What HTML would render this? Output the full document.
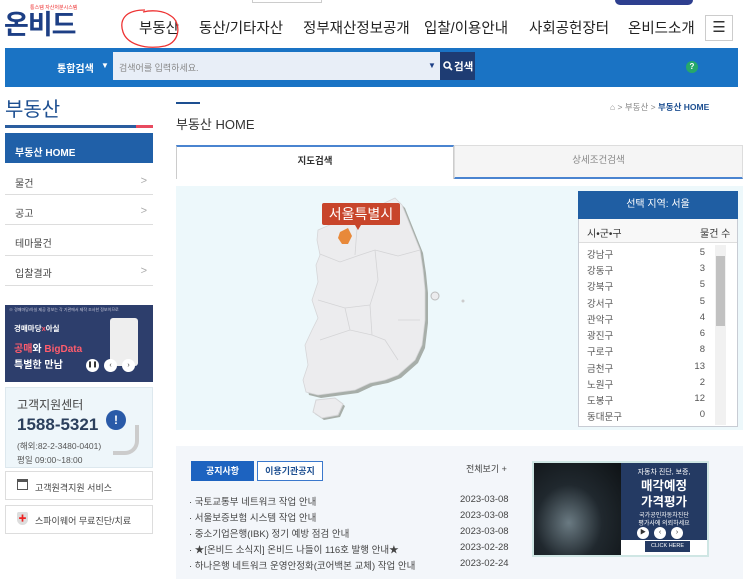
<!DOCTYPE html>
<html><head><meta charset="utf-8">
<style>
*{margin:0;padding:0;box-sizing:border-box}
body{width:743px;height:579px;overflow:hidden;background:#fff;font-family:"Liberation Sans","Noto Sans CJK KR",sans-serif;color:#333;position:relative}
.a{position:absolute}
.nav{font-size:14.5px;color:#222;top:17px}
.mi{position:absolute;left:5px;width:148px;font-size:10px;color:#444;padding-left:10px;border-bottom:1px solid #ddd}
.mi span{position:absolute;right:6px;color:#aaa;font-size:11px}
.row{position:absolute;left:587px;width:118px;font-size:9.5px;color:#555}
.row b{position:absolute;right:0;font-weight:normal}
.nt{position:absolute;left:189px;font-size:9.5px;color:#444}
.nd{position:absolute;left:460px;font-size:9.5px;color:#444}
</style></head><body>
<div class="a" style="left:4px;top:3px;font-size:27px;font-weight:bold;color:#1d3f85;letter-spacing:-1px">온비드</div>
<div class="a" style="left:30px;top:4px;font-size:5px;color:#e33">통스템 자산처분시스템</div>
<div class="nav a" style="left:139px">부동산</div>
<div class="nav a" style="left:199px">동산/기타자산</div>
<div class="nav a" style="left:303px">정부재산정보공개</div>
<div class="nav a" style="left:424px">입찰/이용안내</div>
<div class="nav a" style="left:529px">사회공헌장터</div>
<div class="nav a" style="left:628px">온비드소개</div>
<div class="a" style="left:705px;top:15px;width:28px;height:26px;border:1px solid #ccc;text-align:center;font-size:15px;line-height:24px">☰</div>
<svg class="a" style="left:115px;top:6px" width="72" height="46"><path d="M30 4 C10 4 4 14 8 26 C12 38 30 44 50 40 C66 36 66 16 56 10 C48 4 36 4 28 6" fill="none" stroke="#e33" stroke-width="1.3"/></svg>
<div class="a" style="left:252px;top:0;width:70px;height:3px;border:1px solid #ccc;border-top:none"></div>
<div class="a" style="left:615px;top:0;width:78px;height:5px;background:#2e3f8f;border-radius:0 0 6px 6px"></div>
<div class="a" style="left:5px;top:48px;width:733px;height:39px;background:#1a73c4"></div>
<div class="a" style="left:57px;top:60px;font-size:10px;color:#fff;font-weight:bold">통합검색</div>
<div class="a" style="left:101px;top:61px;font-size:8px;color:#fff">▼</div>
<div class="a" style="left:113px;top:52px;width:327px;height:28px;background:#e8eef7"></div>
<div class="a" style="left:119px;top:61px;font-size:9px;color:#888">검색어를 입력하세요.</div>
<div class="a" style="left:428px;top:61px;font-size:8px;color:#1d3f85">▼</div>
<div class="a" style="left:440px;top:52px;width:35px;height:28px;background:#1e3c73"></div>
<svg class="a" style="left:443px;top:61px" width="10" height="10"><circle cx="4" cy="4" r="3" fill="none" stroke="#fff" stroke-width="1.6"/><path d="M6 6 L9 9" stroke="#fff" stroke-width="1.8"/></svg>
<div class="a" style="left:454px;top:59px;font-size:10.5px;color:#fff;font-weight:bold">검색</div>
<div class="a" style="left:686px;top:61px;width:12px;height:12px;border-radius:50%;background:#26a86a;color:#fff;font-size:8px;text-align:center;line-height:12px;font-weight:bold">?</div>
<div class="a" style="left:5px;top:93px;font-size:20px;color:#1d4f91">부동산</div>
<div class="a" style="left:5px;top:125px;width:131px;height:3px;background:#2a5d9f"></div>
<div class="a" style="left:136px;top:125px;width:17px;height:3px;background:#e84a5f"></div>
<div class="a" style="left:5px;top:133px;width:148px;height:30px;background:#2060a8;color:#fff;font-size:10px;font-weight:bold;padding:11px 0 0 10px">부동산 HOME</div>
<div class="mi" style="top:165px;height:30px;padding-top:10px">물건<span>&gt;</span></div>
<div class="mi" style="top:195px;height:30px;padding-top:10px">공고<span>&gt;</span></div>
<div class="mi" style="top:225px;height:31px;padding-top:10px">테마물건</div>
<div class="mi" style="top:256px;height:30px;padding-top:9px">입찰결과<span>&gt;</span></div>
<div class="a" style="left:5px;top:305px;width:148px;height:77px;background:#2d3e6c"></div>
<div class="a" style="left:9px;top:307px;font-size:4px;color:#ccd">※ 경매마당/아실 제공 정보는 각 기관에서 제작 조사한 정보이므로</div>
<div class="a" style="left:14px;top:323px;font-size:7.5px;color:#fff;font-weight:bold">경매마당<span style="color:#f56">x</span>아실</div>
<div class="a" style="left:14px;top:340px;font-size:10px;color:#ff5c6c;font-weight:bold">공매<span style="color:#fff">와</span> BigData</div>
<div class="a" style="left:14px;top:356px;font-size:10px;color:#fff;font-weight:bold">특별한 만남</div>
<div class="a" style="left:110px;top:318px;width:28px;height:48px;background:#eee;border-radius:3px"></div>
<div class="a" style="left:86px;top:359px;width:13px;height:13px;border-radius:50%;background:#fff;font-size:6px;text-align:center;line-height:13px">❚❚</div>
<div class="a" style="left:104px;top:359px;width:13px;height:13px;border-radius:50%;background:#fff;font-size:7px;text-align:center;line-height:13px">‹</div>
<div class="a" style="left:122px;top:359px;width:13px;height:13px;border-radius:50%;background:#fff;font-size:7px;text-align:center;line-height:13px">›</div>
<div class="a" style="left:5px;top:387px;width:148px;height:81px;background:#eef6fa;border:1px solid #dde8ee"></div>
<div class="a" style="left:17px;top:396px;font-size:12px;color:#444">고객지원센터</div>
<div class="a" style="left:17px;top:415px;font-size:17px;color:#2b3f5c;font-weight:bold">1588-5321</div>
<div class="a" style="left:17px;top:440px;font-size:8.5px;color:#555">(해외:82-2-3480-0401)</div>
<div class="a" style="left:17px;top:454px;font-size:8.5px;color:#555">평일 09:00~18:00</div>
<div class="a" style="left:106px;top:410px;width:20px;height:20px;border-radius:50%;background:#2a5aa8;color:#fff;font-weight:bold;text-align:center;line-height:20px;font-size:12px">!</div>
<div class="a" style="left:113px;top:425px;width:26px;height:30px;border:4px solid #ccc;border-radius:0 0 14px 0;border-left:none;border-top:none"></div>
<div class="a" style="left:5px;top:471px;width:148px;height:29px;border:1px solid #ddd;font-size:9px;color:#444;padding:9px 0 0 29px">고객원격지원 서비스</div>
<div class="a" style="left:17px;top:479px;width:11px;height:11px;border:1px solid #555;border-top-width:3px"></div>
<div class="a" style="left:5px;top:505px;width:148px;height:29px;border:1px solid #ddd;font-size:9px;color:#444;padding:8px 0 0 29px">스파이웨어 무료진단/치료</div>
<div class="a" style="left:17px;top:512px;width:11px;height:13px;background:#ddd;border-radius:2px 2px 6px 6px;color:#e22;font-size:8px;text-align:center;line-height:13px">✚</div>
<div class="a" style="left:176px;top:102px;width:24px;height:2px;background:#1d4f91"></div>
<div class="a" style="left:176px;top:114px;font-size:13px;color:#333">부동산 HOME</div>
<div class="a" style="left:610px;top:101px;font-size:8.5px;color:#888">⌂ &gt; 부동산 &gt; <b style="color:#1d4f91">부동산 HOME</b></div>
<div class="a" style="left:176px;top:145px;width:278px;height:34px;border:1px solid #ccc;border-top:2px solid #4a84d0;border-bottom:none;background:#fff;text-align:center;font-size:9.5px;font-weight:bold;color:#333;line-height:30px">지도검색</div>
<div class="a" style="left:454px;top:145px;width:289px;height:34px;background:#f5f5f5;border:1px solid #ddd;border-bottom:2px solid #4a84d0;text-align:center;font-size:9.5px;color:#888;line-height:30px">상세조건검색</div>
<div class="a" style="left:176px;top:186px;width:567px;height:244px;background:#edf8fb"></div>
<svg class="a" style="left:176px;top:186px" width="400" height="244">
<g transform="translate(-176,-186)">
<path d="M318 230 L332 224 L348 216 L380 205 L395 198 L402 205 L410 225 L420 250 L423 270 L425 290 L425 320 L422 345 L415 360 L398 375 L385 380 L370 383 L355 390 L340 392 L318 395 L306 392 L303 380 L308 365 L305 345 L312 330 L318 318 L312 300 L318 282 L316 265 L320 255 L317 240 Z" fill="#a7aea9" transform="translate(3,3)"/>
<path d="M318 230 L332 224 L348 216 L380 205 L395 198 L402 205 L410 225 L420 250 L423 270 L425 290 L425 320 L422 345 L415 360 L398 375 L385 380 L370 383 L355 390 L340 392 L318 395 L306 392 L303 380 L308 365 L305 345 L312 330 L318 318 L312 300 L318 282 L316 265 L320 255 L317 240 Z" fill="#ececee" stroke="#d6d6d8" stroke-width="0.8"/>
<path d="M320 254 L340 262 L360 255 L375 250 L398 256 L420 250 M355 255 L358 215 M375 250 L378 280 L370 305 L372 335 L385 340 L398 360 M318 300 L345 308 L370 305 M372 335 L350 330 L320 340 M345 308 L350 330 M398 320 L420 320" fill="none" stroke="#d4d4d6" stroke-width="0.8"/>
<path d="M316 400 L335 398 L343 404 L338 415 L322 418 L313 412 Z" fill="#a7aea9" transform="translate(2,2)"/>
<path d="M316 400 L335 398 L343 404 L338 415 L322 418 L313 412 Z" fill="#ececee" stroke="#d6d6d8"/>
<circle cx="435" cy="296" r="4" fill="#ececee" stroke="#bbb"/>
<circle cx="463" cy="301" r="1.5" fill="#ccc"/>
<path d="M340 232 L348 228 L352 236 L348 244 L342 244 L338 238 Z" fill="#e8893a"/>
</g>
<rect x="146" y="17" width="78" height="22" rx="2" fill="#c8452b"/>
<path d="M179 39 L185 39 L182 44 Z" fill="#c8452b"/>
<text x="185" y="33" text-anchor="middle" font-size="14" fill="#fff" font-family="Liberation Sans,Noto Sans CJK KR,sans-serif">서울특별시</text>
</svg>
<div class="a" style="left:578px;top:191px;width:160px;height:236px;background:#fff;border:1px solid #c8ccd4"></div>
<div class="a" style="left:578px;top:191px;width:160px;height:28px;background:#1f5ea3;color:#fff;font-size:10px;text-align:center;line-height:28px">선택 지역: 서울</div>
<div class="a" style="left:579px;top:219px;width:158px;height:24px;background:#f8f8f8;border-bottom:1px solid #ddd"></div>
<div class="a" style="left:587px;top:225px;font-size:10px;color:#333">시•군•구</div>
<div class="a" style="left:700px;top:225px;font-size:10px;color:#333">물건 수</div>
<div class="a" style="left:715px;top:245px;width:11px;height:180px;background:#f1f1f1"></div>
<div class="a" style="left:716px;top:256px;width:9px;height:70px;background:#c1c1c1"></div>
<div class="row" style="top:247px">강남구<b>5</b></div>
<div class="row" style="top:263px">강동구<b>3</b></div>
<div class="row" style="top:279px">강북구<b>5</b></div>
<div class="row" style="top:296px">강서구<b>5</b></div>
<div class="row" style="top:312px">관악구<b>4</b></div>
<div class="row" style="top:328px">광진구<b>6</b></div>
<div class="row" style="top:344px">구로구<b>8</b></div>
<div class="row" style="top:361px">금천구<b>13</b></div>
<div class="row" style="top:377px">노원구<b>2</b></div>
<div class="row" style="top:393px">도봉구<b>12</b></div>
<div class="row" style="top:409px">동대문구<b>0</b></div>
<div class="a" style="left:176px;top:446px;width:567px;height:133px;background:#f3f6fa"></div>
<div class="a" style="left:191px;top:461px;width:63px;height:20px;background:#1d63c0;color:#fff;font-size:9px;font-weight:bold;text-align:center;line-height:20px">공지사항</div>
<div class="a" style="left:257px;top:461px;width:66px;height:20px;background:#fff;border:1px solid #3a78cc;color:#1d4f91;font-size:9px;font-weight:bold;text-align:center;line-height:18px">이용기관공지</div>
<div class="a" style="left:466px;top:462px;font-size:9px;color:#444">전체보기 +</div>
<div class="nt" style="top:494px">· 국토교통부 네트워크 작업 안내</div><div class="nd" style="top:494px">2023-03-08</div>
<div class="nt" style="top:510px">· 서울보증보험 시스템 작업 안내</div><div class="nd" style="top:510px">2023-03-08</div>
<div class="nt" style="top:526px">· 중소기업은행(IBK) 정기 예방 점검 안내</div><div class="nd" style="top:526px">2023-03-08</div>
<div class="nt" style="top:542px">· ★[온비드 소식지] 온비드 나들이 116호 발행 안내★</div><div class="nd" style="top:542px">2023-02-28</div>
<div class="nt" style="top:558px">· 하나은행 네트워크 운영안정화(코어백본 교체) 작업 안내</div><div class="nd" style="top:558px">2023-02-24</div>
<div class="a" style="left:532px;top:461px;width:177px;height:96px;background:#cfe6e4"></div>
<div class="a" style="left:534px;top:463px;width:87px;height:92px;background:radial-gradient(ellipse at 40% 65%,#6a7a82 0%,#20282e 45%,#0e1215 100%)"></div>
<div class="a" style="left:621px;top:463px;width:86px;height:92px;background:#243a63"></div>
<div class="a" style="left:621px;top:540px;width:86px;height:15px;background:#fff"></div>
<div class="a" style="left:621px;top:467px;width:86px;text-align:center;font-size:7px;color:#fff">자동차 진단, 보증,</div>
<div class="a" style="left:621px;top:478px;width:86px;text-align:center;font-size:12.5px;color:#fff;font-weight:bold;line-height:16px">매각예정<br>가격평가</div>
<div class="a" style="left:621px;top:512px;width:86px;text-align:center;font-size:6px;color:#fff;line-height:8px">국가공인자동차진단<br>평가사에 의뢰하세요</div>
<div class="a" style="left:645px;top:541px;width:45px;height:11px;background:#243a63;color:#fff;font-size:5.5px;text-align:center;line-height:11px">CLICK HERE</div>
<div class="a" style="left:637px;top:527px;width:12px;height:12px;border-radius:50%;background:#fff;font-size:6px;text-align:center;line-height:12px">▶</div>
<div class="a" style="left:654px;top:527px;width:12px;height:12px;border-radius:50%;background:#fff;font-size:7px;text-align:center;line-height:12px">‹</div>
<div class="a" style="left:671px;top:527px;width:12px;height:12px;border-radius:50%;background:#fff;font-size:7px;text-align:center;line-height:12px">›</div>
</body></html>
